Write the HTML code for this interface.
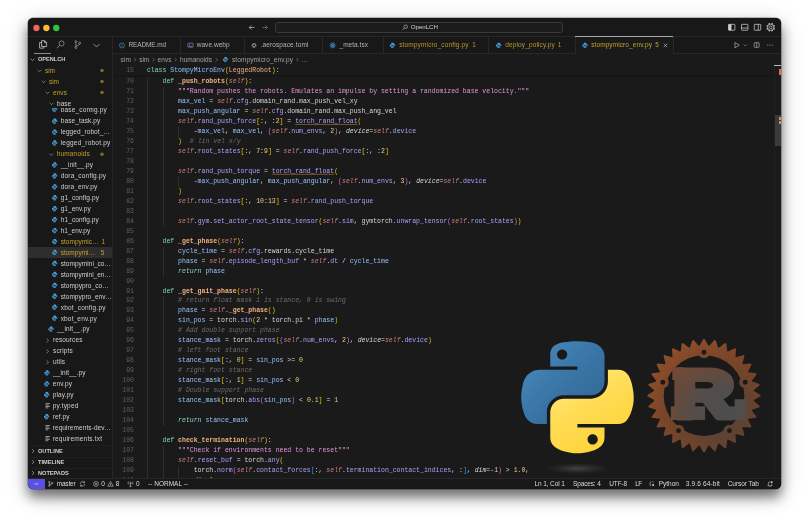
<!DOCTYPE html>
<html lang="en"><head><meta charset="utf-8"><title>OpenLCH</title>
<style>
html,body{margin:0;padding:0}
body{width:809px;height:526px;overflow:hidden;background:#fff;position:relative;font-family:"Liberation Sans", sans-serif}
#win{position:absolute;left:28px;top:18px;width:753px;height:471px;border-radius:5.2px;background:#1a1a1a;overflow:hidden;box-shadow:0 0 0 .5px rgba(0,0,0,.45),0 8px 12px rgba(0,0,0,.48),0 6px 23px rgba(0,0,0,.22)}
#pg{position:absolute;left:-28px;top:-18px;width:809px;height:526px;will-change:transform}
#pg div,#pg span,#pg svg{position:absolute}
.t{white-space:pre;line-height:10px;height:10px;font-family:"Liberation Sans", sans-serif}
.ic{overflow:visible}
.dot{width:3.6px;height:3.6px;border-radius:50%}
.ln{left:112px;width:22px;text-align:right;font:6.5123px/10px "Liberation Mono", monospace;color:#5f5f5f;height:10px}
.cl{left:146.9px;font:6.5123px/10px "Liberation Mono", monospace;white-space:pre;color:#d6d6dd;height:10px}
.cl span{position:static!important}
.g{width:.6px}
.k{color:#83d6c5} .ki{color:#83d6c5;font-style:italic} .c{color:#87c3ff} .i{color:#efb080}
.f{color:#efb080;font-weight:bold} .s{color:#ca7f7c;font-style:italic} .d{color:#e394dc} .v{color:#94c1fa}
.p{color:#aaa0fa} .w{color:#d6d6dd} .n{color:#ebc88d} .m{color:#6d6d6d;font-style:italic} .a{color:#d6d6dd;font-style:italic}
.b1{color:#e6c100} .b2{color:#da70d6} .b3{color:#179fff}
</style></head>
<body>
<div id="win"><div id="pg">
<!-- title bar -->
<div style="left:28px;top:18px;width:754px;height:18.300px;background:#181818"></div>
<div style="left:28px;top:36px;width:754px;height:.7px;background:#272727"></div>
<div style="left:275px;top:21.600px;width:287.500px;height:11.400px;box-sizing:border-box;border:.7px solid #3a3a3a;border-radius:3px;background:#1b1b1b"></div>
<!-- sidebar -->
<div style="left:28px;top:36.600px;width:84.300px;height:442px;background:#181818"></div>
<div style="left:112.200px;top:36.600px;width:.7px;height:442px;background:#272727"></div>
<div style="left:34.200px;top:52.600px;width:17px;height:1px;background:#8c8c8c"></div>
<!-- tree scroller (clipped under sticky rows) -->
<div style="left:28px;top:108px;width:84px;height:337px;overflow:hidden"><div style="left:-28px;top:-108px;width:200px;height:500px">
<div style="left:28px;top:247.33px;width:84.200px;height:11px;background:#2e2e2e"></div>
<svg style="left:0;top:0" width="809" height="526" viewBox="0 0 809 526">
<svg x="51.60" y="106.15" overflow="visible" width="6.2" height="6.2" viewBox="0 0 16 16"><path fill="#4b9fd6" d="M7.9 1C5 1 4.6 2.2 4.6 3.3V5h3.5v.7H3.2C1.9 5.700 1 6.800 1 8.500s.9 2.900 2.200 2.900h1.300V9.600c0-1.300 1.100-2.300 2.400-2.300h3.200c1 0 1.900-.9 1.900-2V3.300C12 2 10.800 1 7.900 1z"/><path fill="#3c83b8" d="M8.100 15c2.900 0 3.300-1.200 3.300-2.300V11H7.900v-.7h4.900c1.300 0 2.200-1.100 2.200-2.800s-.9-2.900-2.200-2.900h-1.300v1.800c0 1.300-1.100 2.300-2.400 2.300H5.900c-1 0-1.900.9-1.900 2v2C4 14 5.200 15 8.100 15z"/></svg>
<svg x="51.60" y="118.09" overflow="visible" width="6.2" height="6.2" viewBox="0 0 16 16"><path fill="#4b9fd6" d="M7.9 1C5 1 4.6 2.2 4.6 3.3V5h3.5v.7H3.2C1.9 5.700 1 6.800 1 8.500s.9 2.900 2.200 2.900h1.300V9.600c0-1.300 1.100-2.300 2.400-2.300h3.200c1 0 1.900-.9 1.900-2V3.300C12 2 10.800 1 7.900 1z"/><path fill="#3c83b8" d="M8.100 15c2.900 0 3.300-1.200 3.300-2.300V11H7.900v-.7h4.900c1.300 0 2.200-1.100 2.200-2.800s-.9-2.900-2.200-2.900h-1.300v1.800c0 1.300-1.100 2.300-2.400 2.300H5.900c-1 0-1.900.9-1.900 2v2C4 14 5.200 15 8.100 15z"/></svg>
<svg x="51.60" y="129.04" overflow="visible" width="6.2" height="6.2" viewBox="0 0 16 16"><path fill="#4b9fd6" d="M7.9 1C5 1 4.6 2.2 4.6 3.3V5h3.5v.7H3.2C1.9 5.700 1 6.800 1 8.500s.9 2.900 2.200 2.900h1.300V9.600c0-1.300 1.100-2.300 2.400-2.300h3.200c1 0 1.900-.9 1.900-2V3.300C12 2 10.800 1 7.900 1z"/><path fill="#3c83b8" d="M8.100 15c2.900 0 3.300-1.200 3.300-2.300V11H7.900v-.7h4.900c1.300 0 2.200-1.100 2.200-2.800s-.9-2.900-2.200-2.900h-1.300v1.800c0 1.300-1.100 2.300-2.400 2.300H5.900c-1 0-1.900.9-1.900 2v2C4 14 5.200 15 8.100 15z"/></svg>
<svg x="51.60" y="139.98" overflow="visible" width="6.2" height="6.2" viewBox="0 0 16 16"><path fill="#4b9fd6" d="M7.9 1C5 1 4.6 2.2 4.6 3.3V5h3.5v.7H3.2C1.9 5.700 1 6.800 1 8.500s.9 2.900 2.200 2.900h1.300V9.600c0-1.300 1.100-2.300 2.400-2.300h3.200c1 0 1.900-.9 1.900-2V3.300C12 2 10.800 1 7.900 1z"/><path fill="#3c83b8" d="M8.100 15c2.900 0 3.300-1.200 3.300-2.300V11H7.900v-.7h4.900c1.300 0 2.200-1.100 2.200-2.800s-.9-2.900-2.200-2.900h-1.300v1.800c0 1.300-1.100 2.300-2.400 2.300H5.900c-1 0-1.900.9-1.900 2v2C4 14 5.200 15 8.100 15z"/></svg>
<svg x="48.70" y="152.03" overflow="visible" width="5" height="5" viewBox="0 0 10 10"><path stroke="#a9a9a9" stroke-width="1.3" fill="none" d="M1.200 3.200L5 7 8.800 3.200"/></svg>
<svg x="99.50" y="151.83" overflow="visible" width="5" height="5" viewBox="0 0 5 5"><circle cx="2.500" cy="2.500" r="1.750" fill="#836b22"/></svg>
<svg x="51.60" y="161.87" overflow="visible" width="6.2" height="6.2" viewBox="0 0 16 16"><path fill="#4b9fd6" d="M7.9 1C5 1 4.6 2.2 4.6 3.3V5h3.5v.7H3.2C1.9 5.700 1 6.800 1 8.500s.9 2.900 2.200 2.900h1.300V9.600c0-1.300 1.100-2.300 2.400-2.300h3.200c1 0 1.900-.9 1.900-2V3.300C12 2 10.800 1 7.900 1z"/><path fill="#3c83b8" d="M8.100 15c2.900 0 3.300-1.200 3.300-2.300V11H7.900v-.7h4.900c1.300 0 2.200-1.100 2.200-2.800s-.9-2.900-2.200-2.900h-1.300v1.800c0 1.300-1.100 2.300-2.400 2.300H5.900c-1 0-1.900.9-1.900 2v2C4 14 5.200 15 8.100 15z"/></svg>
<svg x="51.60" y="172.82" overflow="visible" width="6.2" height="6.2" viewBox="0 0 16 16"><path fill="#4b9fd6" d="M7.9 1C5 1 4.6 2.2 4.6 3.3V5h3.5v.7H3.2C1.9 5.700 1 6.800 1 8.500s.9 2.900 2.200 2.900h1.300V9.600c0-1.300 1.100-2.300 2.400-2.300h3.200c1 0 1.900-.9 1.900-2V3.300C12 2 10.800 1 7.900 1z"/><path fill="#3c83b8" d="M8.100 15c2.900 0 3.300-1.200 3.300-2.300V11H7.900v-.7h4.900c1.300 0 2.200-1.100 2.200-2.800s-.9-2.900-2.200-2.900h-1.300v1.800c0 1.300-1.100 2.300-2.400 2.300H5.900c-1 0-1.900.9-1.900 2v2C4 14 5.200 15 8.100 15z"/></svg>
<svg x="51.60" y="183.76" overflow="visible" width="6.2" height="6.2" viewBox="0 0 16 16"><path fill="#4b9fd6" d="M7.9 1C5 1 4.6 2.2 4.6 3.3V5h3.5v.7H3.2C1.9 5.700 1 6.800 1 8.500s.9 2.900 2.200 2.900h1.300V9.600c0-1.300 1.100-2.300 2.400-2.300h3.200c1 0 1.900-.9 1.900-2V3.300C12 2 10.800 1 7.900 1z"/><path fill="#3c83b8" d="M8.100 15c2.900 0 3.300-1.200 3.300-2.300V11H7.900v-.7h4.900c1.300 0 2.200-1.100 2.200-2.800s-.9-2.900-2.200-2.900h-1.300v1.800c0 1.300-1.100 2.300-2.400 2.300H5.900c-1 0-1.900.9-1.900 2v2C4 14 5.200 15 8.100 15z"/></svg>
<svg x="51.60" y="194.71" overflow="visible" width="6.2" height="6.2" viewBox="0 0 16 16"><path fill="#4b9fd6" d="M7.9 1C5 1 4.6 2.2 4.6 3.3V5h3.5v.7H3.2C1.9 5.700 1 6.800 1 8.500s.9 2.900 2.200 2.900h1.300V9.600c0-1.300 1.100-2.300 2.400-2.300h3.200c1 0 1.900-.9 1.900-2V3.300C12 2 10.800 1 7.900 1z"/><path fill="#3c83b8" d="M8.100 15c2.900 0 3.300-1.200 3.300-2.300V11H7.900v-.7h4.900c1.300 0 2.200-1.100 2.200-2.800s-.9-2.900-2.200-2.900h-1.300v1.800c0 1.300-1.100 2.300-2.400 2.300H5.900c-1 0-1.900.9-1.900 2v2C4 14 5.200 15 8.100 15z"/></svg>
<svg x="51.60" y="205.65" overflow="visible" width="6.2" height="6.2" viewBox="0 0 16 16"><path fill="#4b9fd6" d="M7.9 1C5 1 4.6 2.2 4.6 3.3V5h3.5v.7H3.2C1.9 5.700 1 6.800 1 8.500s.9 2.900 2.200 2.900h1.300V9.600c0-1.300 1.100-2.300 2.400-2.300h3.200c1 0 1.900-.9 1.900-2V3.300C12 2 10.800 1 7.900 1z"/><path fill="#3c83b8" d="M8.100 15c2.900 0 3.300-1.200 3.300-2.300V11H7.900v-.7h4.900c1.300 0 2.200-1.100 2.200-2.800s-.9-2.900-2.200-2.900h-1.300v1.800c0 1.300-1.100 2.300-2.400 2.300H5.900c-1 0-1.900.9-1.900 2v2C4 14 5.200 15 8.100 15z"/></svg>
<svg x="51.60" y="216.60" overflow="visible" width="6.2" height="6.2" viewBox="0 0 16 16"><path fill="#4b9fd6" d="M7.9 1C5 1 4.6 2.2 4.6 3.3V5h3.5v.7H3.2C1.9 5.700 1 6.800 1 8.500s.9 2.900 2.200 2.900h1.300V9.600c0-1.300 1.100-2.300 2.400-2.300h3.200c1 0 1.900-.9 1.900-2V3.300C12 2 10.800 1 7.900 1z"/><path fill="#3c83b8" d="M8.100 15c2.900 0 3.300-1.200 3.300-2.300V11H7.900v-.7h4.900c1.300 0 2.200-1.100 2.200-2.800s-.9-2.900-2.200-2.900h-1.300v1.800c0 1.300-1.100 2.300-2.400 2.300H5.900c-1 0-1.900.9-1.900 2v2C4 14 5.200 15 8.100 15z"/></svg>
<svg x="51.60" y="227.54" overflow="visible" width="6.2" height="6.2" viewBox="0 0 16 16"><path fill="#4b9fd6" d="M7.9 1C5 1 4.6 2.2 4.6 3.3V5h3.5v.7H3.2C1.9 5.700 1 6.800 1 8.500s.9 2.900 2.200 2.900h1.300V9.600c0-1.300 1.100-2.300 2.400-2.300h3.200c1 0 1.900-.9 1.900-2V3.300C12 2 10.800 1 7.900 1z"/><path fill="#3c83b8" d="M8.100 15c2.900 0 3.300-1.200 3.300-2.300V11H7.900v-.7h4.900c1.300 0 2.200-1.100 2.200-2.800s-.9-2.900-2.200-2.900h-1.300v1.800c0 1.300-1.100 2.300-2.400 2.300H5.900c-1 0-1.900.9-1.900 2v2C4 14 5.200 15 8.100 15z"/></svg>
<svg x="51.60" y="238.49" overflow="visible" width="6.2" height="6.2" viewBox="0 0 16 16"><path fill="#4b9fd6" d="M7.9 1C5 1 4.6 2.2 4.6 3.3V5h3.5v.7H3.2C1.9 5.700 1 6.800 1 8.500s.9 2.900 2.200 2.900h1.300V9.600c0-1.300 1.100-2.300 2.400-2.300h3.200c1 0 1.900-.9 1.900-2V3.300C12 2 10.800 1 7.900 1z"/><path fill="#3c83b8" d="M8.100 15c2.900 0 3.300-1.200 3.300-2.300V11H7.900v-.7h4.900c1.300 0 2.200-1.100 2.200-2.800s-.9-2.900-2.200-2.900h-1.300v1.800c0 1.300-1.100 2.300-2.400 2.300H5.900c-1 0-1.900.9-1.900 2v2C4 14 5.200 15 8.100 15z"/></svg>
<svg x="51.60" y="249.43" overflow="visible" width="6.2" height="6.2" viewBox="0 0 16 16"><path fill="#4b9fd6" d="M7.9 1C5 1 4.6 2.2 4.6 3.3V5h3.5v.7H3.2C1.9 5.700 1 6.800 1 8.500s.9 2.900 2.200 2.900h1.300V9.600c0-1.300 1.100-2.300 2.400-2.300h3.200c1 0 1.900-.9 1.900-2V3.300C12 2 10.800 1 7.900 1z"/><path fill="#3c83b8" d="M8.100 15c2.900 0 3.300-1.200 3.300-2.300V11H7.900v-.7h4.900c1.300 0 2.200-1.100 2.200-2.800s-.9-2.900-2.200-2.900h-1.300v1.800c0 1.300-1.100 2.300-2.400 2.300H5.900c-1 0-1.900.9-1.900 2v2C4 14 5.200 15 8.100 15z"/></svg>
<svg x="51.60" y="260.38" overflow="visible" width="6.2" height="6.2" viewBox="0 0 16 16"><path fill="#4b9fd6" d="M7.9 1C5 1 4.6 2.2 4.6 3.3V5h3.5v.7H3.2C1.9 5.700 1 6.800 1 8.500s.9 2.900 2.200 2.900h1.300V9.600c0-1.300 1.100-2.300 2.400-2.300h3.200c1 0 1.900-.9 1.900-2V3.300C12 2 10.800 1 7.900 1z"/><path fill="#3c83b8" d="M8.100 15c2.900 0 3.300-1.200 3.300-2.300V11H7.900v-.7h4.900c1.300 0 2.200-1.100 2.200-2.800s-.9-2.900-2.200-2.900h-1.300v1.800c0 1.300-1.100 2.300-2.400 2.300H5.900c-1 0-1.900.9-1.900 2v2C4 14 5.200 15 8.100 15z"/></svg>
<svg x="51.60" y="271.32" overflow="visible" width="6.2" height="6.2" viewBox="0 0 16 16"><path fill="#4b9fd6" d="M7.9 1C5 1 4.6 2.2 4.6 3.3V5h3.5v.7H3.2C1.9 5.700 1 6.800 1 8.500s.9 2.900 2.200 2.900h1.300V9.600c0-1.300 1.100-2.300 2.400-2.300h3.200c1 0 1.900-.9 1.900-2V3.300C12 2 10.800 1 7.900 1z"/><path fill="#3c83b8" d="M8.100 15c2.900 0 3.300-1.200 3.300-2.300V11H7.900v-.7h4.900c1.300 0 2.200-1.100 2.200-2.800s-.9-2.900-2.200-2.900h-1.300v1.800c0 1.300-1.100 2.300-2.400 2.300H5.900c-1 0-1.900.9-1.900 2v2C4 14 5.200 15 8.100 15z"/></svg>
<svg x="51.60" y="282.27" overflow="visible" width="6.2" height="6.2" viewBox="0 0 16 16"><path fill="#4b9fd6" d="M7.9 1C5 1 4.6 2.2 4.6 3.3V5h3.5v.7H3.2C1.9 5.700 1 6.800 1 8.500s.9 2.900 2.200 2.900h1.300V9.600c0-1.300 1.100-2.300 2.400-2.300h3.200c1 0 1.900-.9 1.900-2V3.300C12 2 10.800 1 7.900 1z"/><path fill="#3c83b8" d="M8.100 15c2.900 0 3.300-1.200 3.300-2.300V11H7.900v-.7h4.900c1.300 0 2.200-1.100 2.200-2.800s-.9-2.900-2.200-2.900h-1.300v1.800c0 1.300-1.100 2.300-2.400 2.300H5.900c-1 0-1.900.9-1.900 2v2C4 14 5.200 15 8.100 15z"/></svg>
<svg x="51.60" y="293.21" overflow="visible" width="6.2" height="6.2" viewBox="0 0 16 16"><path fill="#4b9fd6" d="M7.9 1C5 1 4.6 2.2 4.6 3.3V5h3.5v.7H3.2C1.9 5.700 1 6.800 1 8.500s.9 2.900 2.200 2.900h1.300V9.600c0-1.300 1.100-2.300 2.400-2.300h3.200c1 0 1.900-.9 1.900-2V3.300C12 2 10.800 1 7.900 1z"/><path fill="#3c83b8" d="M8.100 15c2.900 0 3.300-1.200 3.300-2.300V11H7.900v-.7h4.900c1.300 0 2.200-1.100 2.200-2.800s-.9-2.900-2.200-2.900h-1.300v1.800c0 1.300-1.100 2.300-2.400 2.300H5.900c-1 0-1.900.9-1.900 2v2C4 14 5.200 15 8.100 15z"/></svg>
<svg x="51.60" y="304.16" overflow="visible" width="6.2" height="6.2" viewBox="0 0 16 16"><path fill="#4b9fd6" d="M7.9 1C5 1 4.6 2.2 4.6 3.3V5h3.5v.7H3.2C1.9 5.700 1 6.800 1 8.500s.9 2.900 2.200 2.900h1.300V9.600c0-1.300 1.100-2.300 2.400-2.300h3.200c1 0 1.900-.9 1.900-2V3.300C12 2 10.800 1 7.900 1z"/><path fill="#3c83b8" d="M8.100 15c2.900 0 3.300-1.200 3.300-2.300V11H7.900v-.7h4.900c1.300 0 2.200-1.100 2.200-2.800s-.9-2.900-2.200-2.900h-1.300v1.800c0 1.300-1.100 2.300-2.400 2.300H5.900c-1 0-1.900.9-1.900 2v2C4 14 5.200 15 8.100 15z"/></svg>
<svg x="51.60" y="315.10" overflow="visible" width="6.2" height="6.2" viewBox="0 0 16 16"><path fill="#4b9fd6" d="M7.9 1C5 1 4.6 2.2 4.6 3.3V5h3.5v.7H3.2C1.9 5.700 1 6.800 1 8.500s.9 2.900 2.200 2.900h1.300V9.600c0-1.300 1.100-2.300 2.400-2.300h3.200c1 0 1.900-.9 1.900-2V3.300C12 2 10.800 1 7.900 1z"/><path fill="#3c83b8" d="M8.100 15c2.900 0 3.300-1.200 3.300-2.300V11H7.900v-.7h4.900c1.300 0 2.200-1.100 2.200-2.800s-.9-2.900-2.200-2.900h-1.300v1.800c0 1.300-1.100 2.300-2.400 2.300H5.900c-1 0-1.900.9-1.900 2v2C4 14 5.200 15 8.100 15z"/></svg>
<svg x="47.90" y="326.05" overflow="visible" width="6.2" height="6.2" viewBox="0 0 16 16"><path fill="#4b9fd6" d="M7.9 1C5 1 4.6 2.2 4.6 3.3V5h3.5v.7H3.2C1.9 5.700 1 6.800 1 8.500s.9 2.900 2.200 2.900h1.300V9.600c0-1.300 1.100-2.300 2.400-2.300h3.200c1 0 1.900-.9 1.900-2V3.300C12 2 10.800 1 7.900 1z"/><path fill="#3c83b8" d="M8.100 15c2.900 0 3.300-1.200 3.300-2.300V11H7.900v-.7h4.900c1.300 0 2.200-1.100 2.200-2.800s-.9-2.900-2.200-2.900h-1.300v1.800c0 1.300-1.100 2.300-2.400 2.300H5.900c-1 0-1.900.9-1.900 2v2C4 14 5.200 15 8.100 15z"/></svg>
<svg x="45.00" y="337.89" overflow="visible" width="5" height="5" viewBox="0 0 10 10"><path stroke="#a9a9a9" stroke-width="1.3" fill="none" d="M3.200 1.200L7 5 3.200 8.800"/></svg>
<svg x="45.00" y="348.84" overflow="visible" width="5" height="5" viewBox="0 0 10 10"><path stroke="#a9a9a9" stroke-width="1.3" fill="none" d="M3.200 1.200L7 5 3.200 8.800"/></svg>
<svg x="45.00" y="359.78" overflow="visible" width="5" height="5" viewBox="0 0 10 10"><path stroke="#a9a9a9" stroke-width="1.3" fill="none" d="M3.200 1.200L7 5 3.200 8.800"/></svg>
<svg x="43.90" y="369.83" overflow="visible" width="6.2" height="6.2" viewBox="0 0 16 16"><path fill="#4b9fd6" d="M7.9 1C5 1 4.6 2.2 4.6 3.3V5h3.5v.7H3.2C1.9 5.700 1 6.800 1 8.500s.9 2.900 2.200 2.900h1.300V9.600c0-1.300 1.100-2.300 2.400-2.300h3.200c1 0 1.900-.9 1.900-2V3.300C12 2 10.800 1 7.900 1z"/><path fill="#3c83b8" d="M8.100 15c2.900 0 3.300-1.200 3.300-2.300V11H7.900v-.7h4.900c1.300 0 2.200-1.100 2.200-2.800s-.9-2.900-2.200-2.900h-1.300v1.800c0 1.300-1.100 2.300-2.400 2.300H5.900c-1 0-1.900.9-1.900 2v2C4 14 5.200 15 8.100 15z"/></svg>
<svg x="43.60" y="380.77" overflow="visible" width="6.2" height="6.2" viewBox="0 0 16 16"><path fill="#4b9fd6" d="M7.9 1C5 1 4.6 2.2 4.6 3.3V5h3.5v.7H3.2C1.9 5.700 1 6.800 1 8.500s.9 2.900 2.200 2.900h1.300V9.600c0-1.300 1.100-2.300 2.400-2.300h3.200c1 0 1.900-.9 1.900-2V3.300C12 2 10.800 1 7.900 1z"/><path fill="#3c83b8" d="M8.100 15c2.900 0 3.300-1.200 3.300-2.300V11H7.900v-.7h4.900c1.300 0 2.200-1.100 2.200-2.800s-.9-2.900-2.200-2.900h-1.300v1.800c0 1.300-1.100 2.300-2.400 2.300H5.900c-1 0-1.900.9-1.900 2v2C4 14 5.200 15 8.100 15z"/></svg>
<svg x="43.60" y="391.72" overflow="visible" width="6.2" height="6.2" viewBox="0 0 16 16"><path fill="#4b9fd6" d="M7.9 1C5 1 4.6 2.2 4.6 3.3V5h3.5v.7H3.2C1.9 5.700 1 6.800 1 8.500s.9 2.900 2.200 2.900h1.300V9.600c0-1.300 1.100-2.300 2.400-2.300h3.200c1 0 1.900-.9 1.900-2V3.300C12 2 10.800 1 7.900 1z"/><path fill="#3c83b8" d="M8.100 15c2.900 0 3.300-1.200 3.300-2.300V11H7.900v-.7h4.900c1.300 0 2.200-1.100 2.200-2.800s-.9-2.900-2.200-2.900h-1.300v1.800c0 1.300-1.100 2.300-2.400 2.300H5.900c-1 0-1.900.9-1.900 2v2C4 14 5.200 15 8.100 15z"/></svg>
<svg x="44.70" y="402.76" overflow="visible" width="6" height="6" viewBox="0 0 12 12"><path stroke="#b8b8b8" stroke-width="1.500" fill="none" d="M1.500 1.800h9M1.500 4.600h6.500M1.500 7.400h9M1.500 10.200h5.500"/></svg>
<svg x="43.60" y="413.61" overflow="visible" width="6.2" height="6.2" viewBox="0 0 16 16"><path fill="#4b9fd6" d="M7.9 1C5 1 4.6 2.2 4.6 3.3V5h3.5v.7H3.2C1.9 5.700 1 6.800 1 8.500s.9 2.900 2.200 2.900h1.300V9.600c0-1.300 1.100-2.300 2.400-2.300h3.200c1 0 1.900-.9 1.900-2V3.300C12 2 10.800 1 7.900 1z"/><path fill="#3c83b8" d="M8.100 15c2.900 0 3.300-1.200 3.300-2.300V11H7.900v-.7h4.900c1.300 0 2.200-1.100 2.200-2.800s-.9-2.900-2.200-2.900h-1.300v1.800c0 1.300-1.100 2.300-2.400 2.300H5.900c-1 0-1.900.9-1.900 2v2C4 14 5.200 15 8.100 15z"/></svg>
<svg x="44.70" y="424.65" overflow="visible" width="6" height="6" viewBox="0 0 12 12"><path stroke="#b8b8b8" stroke-width="1.500" fill="none" d="M1.500 1.800h9M1.500 4.600h6.500M1.500 7.400h9M1.500 10.200h5.500"/></svg>
<svg x="44.70" y="435.60" overflow="visible" width="6" height="6" viewBox="0 0 12 12"><path stroke="#b8b8b8" stroke-width="1.500" fill="none" d="M1.500 1.800h9M1.500 4.600h6.500M1.500 7.400h9M1.500 10.200h5.500"/></svg>
</svg>
<span class="t" style="left:60.70px;top:104.55px;font-size:6.5px;color:#cfcfcf;letter-spacing:0.183px;">base_config.py</span>
<span class="t" style="left:60.70px;top:116.49px;font-size:6.5px;color:#cfcfcf;letter-spacing:0.124px;">base_task.py</span>
<span class="t" style="left:60.70px;top:127.44px;font-size:6.5px;color:#cfcfcf;letter-spacing:0.087px;">legged_robot_…</span>
<span class="t" style="left:60.70px;top:138.38px;font-size:6.5px;color:#cfcfcf;letter-spacing:0.212px;">legged_robot.py</span>
<span class="t" style="left:56.70px;top:149.33px;font-size:6.5px;color:#c5a028;letter-spacing:0.165px;">humanoids</span>
<span class="t" style="left:60.70px;top:160.27px;font-size:6.5px;color:#cfcfcf;letter-spacing:0.095px;">__init__.py</span>
<span class="t" style="left:60.70px;top:171.22px;font-size:6.5px;color:#cfcfcf;letter-spacing:0.204px;">dora_config.py</span>
<span class="t" style="left:60.70px;top:182.16px;font-size:6.5px;color:#cfcfcf;letter-spacing:0.137px;">dora_env.py</span>
<span class="t" style="left:60.70px;top:193.11px;font-size:6.5px;color:#cfcfcf;letter-spacing:0.135px;">g1_config.py</span>
<span class="t" style="left:60.70px;top:204.05px;font-size:6.5px;color:#cfcfcf;letter-spacing:0.054px;">g1_env.py</span>
<span class="t" style="left:60.70px;top:215.00px;font-size:6.5px;color:#cfcfcf;letter-spacing:0.119px;">h1_config.py</span>
<span class="t" style="left:60.70px;top:225.94px;font-size:6.5px;color:#cfcfcf;letter-spacing:-0.002px;">h1_env.py</span>
<span class="t" style="left:60.70px;top:236.89px;font-size:6.5px;color:#c5a028;letter-spacing:0.044px;">stompymic…</span>
<span class="t" style="left:101.40px;top:236.89px;font-size:6.5px;color:#c5a028;letter-spacing:0.000px;">1</span>
<span class="t" style="left:60.70px;top:247.83px;font-size:6.5px;color:#c5a028;letter-spacing:-0.001px;">stompymi…</span>
<span class="t" style="left:100.70px;top:247.83px;font-size:6.5px;color:#c5a028;letter-spacing:0.000px;">5</span>
<span class="t" style="left:60.70px;top:258.78px;font-size:6.5px;color:#cfcfcf;letter-spacing:0.032px;">stompymini_co…</span>
<span class="t" style="left:60.70px;top:269.72px;font-size:6.5px;color:#cfcfcf;letter-spacing:0.006px;">stompymini_en…</span>
<span class="t" style="left:60.70px;top:280.67px;font-size:6.5px;color:#cfcfcf;letter-spacing:0.052px;">stompypro_co…</span>
<span class="t" style="left:60.70px;top:291.61px;font-size:6.5px;color:#cfcfcf;letter-spacing:0.025px;">stompypro_env…</span>
<span class="t" style="left:60.70px;top:302.56px;font-size:6.5px;color:#cfcfcf;letter-spacing:0.220px;">xbot_config.py</span>
<span class="t" style="left:60.70px;top:313.50px;font-size:6.5px;color:#cfcfcf;letter-spacing:0.157px;">xbot_env.py</span>
<span class="t" style="left:57.00px;top:324.45px;font-size:6.5px;color:#cfcfcf;letter-spacing:0.095px;">__init__.py</span>
<span class="t" style="left:53.00px;top:335.39px;font-size:6.5px;color:#cfcfcf;letter-spacing:0.106px;">resources</span>
<span class="t" style="left:53.00px;top:346.34px;font-size:6.5px;color:#cfcfcf;letter-spacing:0.174px;">scripts</span>
<span class="t" style="left:53.00px;top:357.28px;font-size:6.5px;color:#cfcfcf;letter-spacing:0.087px;">utils</span>
<span class="t" style="left:53.00px;top:368.23px;font-size:6.5px;color:#cfcfcf;letter-spacing:0.095px;">__init__.py</span>
<span class="t" style="left:52.70px;top:379.17px;font-size:6.5px;color:#cfcfcf;letter-spacing:0.105px;">env.py</span>
<span class="t" style="left:52.70px;top:390.12px;font-size:6.5px;color:#cfcfcf;letter-spacing:0.125px;">play.py</span>
<span class="t" style="left:52.70px;top:401.06px;font-size:6.5px;color:#cfcfcf;letter-spacing:0.238px;">py.typed</span>
<span class="t" style="left:52.70px;top:412.01px;font-size:6.5px;color:#cfcfcf;letter-spacing:0.122px;">ref.py</span>
<span class="t" style="left:52.70px;top:422.95px;font-size:6.5px;color:#cfcfcf;letter-spacing:0.084px;">requirements-dev…</span>
<span class="t" style="left:52.70px;top:433.90px;font-size:6.5px;color:#cfcfcf;letter-spacing:0.181px;">requirements.txt</span>
</div></div>
<!-- sidebar section headers -->
<div style="left:28px;top:445.400px;width:84.200px;height:.6px;background:#1f1f1f"></div>
<div style="left:28px;top:456.500px;width:84.200px;height:.6px;background:#1f1f1f"></div>
<div style="left:28px;top:467.500px;width:84.200px;height:.6px;background:#1f1f1f"></div>
<!-- tab bar -->
<div style="left:112.900px;top:36.600px;width:669px;height:17.200px;background:#181818"></div>
<div style="left:112.900px;top:53.400px;width:669px;height:.7px;background:#272727"></div>
<div style="left:575.400px;top:36.600px;width:97.300px;height:17.600px;background:#1a1a1a"></div>
<div style="left:575.400px;top:36.200px;width:97.300px;height:.8px;background:#a8a8a8"></div>
<div style="left:180.400px;top:36.600px;width:.6px;height:17px;background:#272727"></div>
<div style="left:244px;top:36.600px;width:.6px;height:17px;background:#272727"></div>
<div style="left:322.400px;top:36.600px;width:.6px;height:17px;background:#272727"></div>
<div style="left:382.600px;top:36.600px;width:.6px;height:17px;background:#272727"></div>
<div style="left:488px;top:36.600px;width:.6px;height:17px;background:#272727"></div>
<div style="left:575.100px;top:36.600px;width:.6px;height:17px;background:#272727"></div>
<div style="left:672.600px;top:36.600px;width:.6px;height:17px;background:#272727"></div>
<!-- editor -->
<div class="g" style="left:146.90px;top:77.32px;height:418.40px;background:#2e2e2e"></div>
<div class="g" style="left:162.53px;top:87.28px;height:139.47px;background:#2e2e2e"></div>
<div class="g" style="left:162.53px;top:246.67px;height:29.89px;background:#2e2e2e"></div>
<div class="g" style="left:162.53px;top:296.48px;height:129.51px;background:#2e2e2e"></div>
<div class="g" style="left:162.53px;top:445.91px;height:49.81px;background:#2e2e2e"></div>
<div class="g" style="left:178.16px;top:127.13px;height:9.96px;background:#2e2e2e"></div>
<div class="g" style="left:178.16px;top:176.94px;height:9.96px;background:#2e2e2e"></div>
<div class="g" style="left:178.16px;top:465.84px;height:29.89px;background:#2e2e2e"></div>
<div style="left:112.900px;top:64.500px;width:661px;height:10.600px;background:#1a1a1a"></div>
<div style="left:112.900px;top:75px;width:661px;height:1.500px;background:linear-gradient(rgba(0,0,0,.25),rgba(0,0,0,0))"></div>
<div class="ln" style="top:65.80px">15</div>
<div class="cl" style="top:65.80px"><span class="k">class</span> <span class="c">StompyMicroEnv</span><span class="b1">(</span><span class="i">LeggedRobot</span><span class="b1">)</span><span class="w">:</span></div>
<div class="ln" style="top:77.30px">70</div>
<div class="cl" style="top:77.30px">    <span class="k">def</span> <span class="f">_push_robots</span><span class="b1">(</span><span class="s">self</span><span class="b1">)</span><span class="w">:</span></div>
<div class="ln" style="top:87.26px">71</div>
<div class="cl" style="top:87.26px">        <span class="d">&quot;&quot;&quot;Random pushes the robots. Emulates an impulse by setting a randomized base velocity.&quot;&quot;&quot;</span></div>
<div class="ln" style="top:97.22px">72</div>
<div class="cl" style="top:97.22px">        <span class="v">max_vel</span><span class="w"> = </span><span class="s">self</span><span class="w">.</span><span class="p">cfg</span><span class="w">.domain_rand.max_push_vel_xy</span></div>
<div class="ln" style="top:107.19px">73</div>
<div class="cl" style="top:107.19px">        <span class="v">max_push_angular</span><span class="w"> = </span><span class="s">self</span><span class="w">.</span><span class="p">cfg</span><span class="w">.domain_rand.max_push_ang_vel</span></div>
<div class="ln" style="top:117.15px">74</div>
<div class="cl" style="top:117.15px">        <span class="s">self</span><span class="w">.</span><span class="p">rand_push_force</span><span class="b1">[</span><span class="w">:, :</span><span class="n">2</span><span class="b1">]</span><span class="w"> = </span><span class="p">torch_rand_float</span><span class="b1">(</span></div>
<div class="ln" style="top:127.11px">75</div>
<div class="cl" style="top:127.11px">            <span class="w">-</span><span class="v">max_vel</span><span class="w">, </span><span class="v">max_vel</span><span class="w">, </span><span class="b2">(</span><span class="s">self</span><span class="w">.</span><span class="p">num_envs</span><span class="w">, </span><span class="n">2</span><span class="b2">)</span><span class="w">, </span><span class="a">device</span><span class="w">=</span><span class="s">self</span><span class="w">.</span><span class="p">device</span></div>
<div class="ln" style="top:137.07px">76</div>
<div class="cl" style="top:137.07px">        <span class="b1">)</span>  <span class="m"># lin vel x/y</span></div>
<div class="ln" style="top:147.03px">77</div>
<div class="cl" style="top:147.03px">        <span class="s">self</span><span class="w">.</span><span class="p">root_states</span><span class="b1">[</span><span class="w">:, </span><span class="n">7</span><span class="w">:</span><span class="n">9</span><span class="b1">]</span><span class="w"> = </span><span class="s">self</span><span class="w">.</span><span class="p">rand_push_force</span><span class="b1">[</span><span class="w">:, :</span><span class="n">2</span><span class="b1">]</span></div>
<div class="ln" style="top:157.00px">78</div>
<div class="ln" style="top:166.96px">79</div>
<div class="cl" style="top:166.96px">        <span class="s">self</span><span class="w">.</span><span class="p">rand_push_torque</span><span class="w"> = </span><span class="p">torch_rand_float</span><span class="b1">(</span></div>
<div class="ln" style="top:176.92px">80</div>
<div class="cl" style="top:176.92px">            <span class="w">-</span><span class="v">max_push_angular</span><span class="w">, </span><span class="v">max_push_angular</span><span class="w">, </span><span class="b2">(</span><span class="s">self</span><span class="w">.</span><span class="p">num_envs</span><span class="w">, </span><span class="n">3</span><span class="b2">)</span><span class="w">, </span><span class="a">device</span><span class="w">=</span><span class="s">self</span><span class="w">.</span><span class="p">device</span></div>
<div class="ln" style="top:186.88px">81</div>
<div class="cl" style="top:186.88px">        <span class="b1">)</span></div>
<div class="ln" style="top:196.84px">82</div>
<div class="cl" style="top:196.84px">        <span class="s">self</span><span class="w">.</span><span class="p">root_states</span><span class="b1">[</span><span class="w">:, </span><span class="n">10</span><span class="w">:</span><span class="n">13</span><span class="b1">]</span><span class="w"> = </span><span class="s">self</span><span class="w">.</span><span class="p">rand_push_torque</span></div>
<div class="ln" style="top:206.81px">83</div>
<div class="ln" style="top:216.77px">84</div>
<div class="cl" style="top:216.77px">        <span class="s">self</span><span class="w">.</span><span class="p">gym</span><span class="w">.</span><span class="p">set_actor_root_state_tensor</span><span class="b1">(</span><span class="s">self</span><span class="w">.</span><span class="p">sim</span><span class="w">, gymtorch.</span><span class="p">unwrap_tensor</span><span class="b2">(</span><span class="s">self</span><span class="w">.</span><span class="p">root_states</span><span class="b2">)</span><span class="b1">)</span></div>
<div class="ln" style="top:226.73px">85</div>
<div class="ln" style="top:236.69px">86</div>
<div class="cl" style="top:236.69px">    <span class="k">def</span> <span class="f">_get_phase</span><span class="b1">(</span><span class="s">self</span><span class="b1">)</span><span class="w">:</span></div>
<div class="ln" style="top:246.65px">87</div>
<div class="cl" style="top:246.65px">        <span class="v">cycle_time</span><span class="w"> = </span><span class="s">self</span><span class="w">.</span><span class="p">cfg</span><span class="w">.rewards.cycle_time</span></div>
<div class="ln" style="top:256.62px">88</div>
<div class="cl" style="top:256.62px">        <span class="v">phase</span><span class="w"> = </span><span class="s">self</span><span class="w">.</span><span class="p">episode_length_buf</span><span class="w"> * </span><span class="s">self</span><span class="w">.</span><span class="p">dt</span><span class="w"> / </span><span class="v">cycle_time</span></div>
<div class="ln" style="top:266.58px">89</div>
<div class="cl" style="top:266.58px">        <span class="ki">return</span> <span class="v">phase</span></div>
<div class="ln" style="top:276.54px">90</div>
<div class="ln" style="top:286.50px">91</div>
<div class="cl" style="top:286.50px">    <span class="k">def</span> <span class="f">_get_gait_phase</span><span class="b1">(</span><span class="s">self</span><span class="b1">)</span><span class="w">:</span></div>
<div class="ln" style="top:296.46px">92</div>
<div class="cl" style="top:296.46px">        <span class="m"># return float mask 1 is stance, 0 is swing</span></div>
<div class="ln" style="top:306.43px">93</div>
<div class="cl" style="top:306.43px">        <span class="v">phase</span><span class="w"> = </span><span class="s">self</span><span class="w">.</span><span class="f">_get_phase</span><span class="b1">()</span></div>
<div class="ln" style="top:316.39px">94</div>
<div class="cl" style="top:316.39px">        <span class="v">sin_pos</span><span class="w"> = torch.</span><span class="p">sin</span><span class="b1">(</span><span class="n">2</span><span class="w"> * torch.pi * </span><span class="v">phase</span><span class="b1">)</span></div>
<div class="ln" style="top:326.35px">95</div>
<div class="cl" style="top:326.35px">        <span class="m"># Add double support phase</span></div>
<div class="ln" style="top:336.31px">96</div>
<div class="cl" style="top:336.31px">        <span class="v">stance_mask</span><span class="w"> = torch.</span><span class="p">zeros</span><span class="b1">(</span><span class="b2">(</span><span class="s">self</span><span class="w">.</span><span class="p">num_envs</span><span class="w">, </span><span class="n">2</span><span class="b2">)</span><span class="w">, </span><span class="a">device</span><span class="w">=</span><span class="s">self</span><span class="w">.</span><span class="p">device</span><span class="b1">)</span></div>
<div class="ln" style="top:346.27px">97</div>
<div class="cl" style="top:346.27px">        <span class="m"># left foot stance</span></div>
<div class="ln" style="top:356.24px">98</div>
<div class="cl" style="top:356.24px">        <span class="v">stance_mask</span><span class="b1">[</span><span class="w">:, </span><span class="n">0</span><span class="b1">]</span><span class="w"> = </span><span class="v">sin_pos</span><span class="w"> &gt;= </span><span class="n">0</span></div>
<div class="ln" style="top:366.20px">99</div>
<div class="cl" style="top:366.20px">        <span class="m"># right foot stance</span></div>
<div class="ln" style="top:376.16px">100</div>
<div class="cl" style="top:376.16px">        <span class="v">stance_mask</span><span class="b1">[</span><span class="w">:, </span><span class="n">1</span><span class="b1">]</span><span class="w"> = </span><span class="v">sin_pos</span><span class="w"> &lt; </span><span class="n">0</span></div>
<div class="ln" style="top:386.12px">101</div>
<div class="cl" style="top:386.12px">        <span class="m"># Double support phase</span></div>
<div class="ln" style="top:396.08px">102</div>
<div class="cl" style="top:396.08px">        <span class="v">stance_mask</span><span class="b1">[</span><span class="w">torch.</span><span class="p">abs</span><span class="b2">(</span><span class="v">sin_pos</span><span class="b2">)</span><span class="w"> &lt; </span><span class="n">0.1</span><span class="b1">]</span><span class="w"> = </span><span class="n">1</span></div>
<div class="ln" style="top:406.05px">103</div>
<div class="ln" style="top:416.01px">104</div>
<div class="cl" style="top:416.01px">        <span class="ki">return</span> <span class="v">stance_mask</span></div>
<div class="ln" style="top:425.97px">105</div>
<div class="ln" style="top:435.93px">106</div>
<div class="cl" style="top:435.93px">    <span class="k">def</span> <span class="f">check_termination</span><span class="b1">(</span><span class="s">self</span><span class="b1">)</span><span class="w">:</span></div>
<div class="ln" style="top:445.89px">107</div>
<div class="cl" style="top:445.89px">        <span class="d">&quot;&quot;&quot;Check if environments need to be reset&quot;&quot;&quot;</span></div>
<div class="ln" style="top:455.86px">108</div>
<div class="cl" style="top:455.86px">        <span class="s">self</span><span class="w">.</span><span class="p">reset_buf</span><span class="w"> = torch.</span><span class="p">any</span><span class="b1">(</span></div>
<div class="ln" style="top:465.82px">109</div>
<div class="cl" style="top:465.82px">            <span class="w">torch.</span><span class="p">norm</span><span class="b2">(</span><span class="s">self</span><span class="w">.</span><span class="p">contact_forces</span><span class="b3">[</span><span class="w">:, </span><span class="s">self</span><span class="w">.</span><span class="p">termination_contact_indices</span><span class="w">, :</span><span class="b3">]</span><span class="w">, </span><span class="a">dim</span><span class="w">=-</span><span class="n">1</span><span class="b2">)</span><span class="w"> &gt; </span><span class="n">1.0</span><span class="w">,</span></div>
<div class="ln" style="top:475.78px">110</div>
<div class="cl" style="top:475.78px">            <span class="a">dim</span><span class="w">=</span><span class="n">1</span><span class="w">,</span></div>
<!-- overview ruler / scrollbar -->
<div style="left:774px;top:65.200px;width:.6px;height:413.300px;background:#212121"></div>
<div style="left:774.300px;top:65px;width:7px;height:.9px;background:#b8b8b8"></div>
<div style="left:774.600px;top:115px;width:6.600px;height:30.600px;background:#3a3a3a"></div>
<div style="left:778.600px;top:69px;width:2.600px;height:5.600px;background:#f0693e"></div>
<div style="left:778.600px;top:117.300px;width:2.600px;height:2.600px;background:#c99a52"></div>
<div style="left:778.600px;top:121px;width:2.600px;height:2.600px;background:#c99a52"></div>
<!-- status bar -->
<div style="left:28px;top:478.500px;width:754px;height:11px;background:#181818"></div>
<div style="left:28px;top:478.300px;width:754px;height:.6px;background:#272727"></div>
<div style="left:28px;top:478.500px;width:16.800px;height:11px;background:#5a50e6"></div>
<svg style="left:0;top:0" width="809" height="526" viewBox="0 0 809 526">
<svg x="30.00" y="57.00" overflow="visible" width="5" height="5" viewBox="0 0 10 10"><path stroke="#bdbdbd" stroke-width="1.3" fill="none" d="M1.200 3.200L5 7 8.800 3.200"/></svg>
<svg x="37.00" y="68.20" overflow="visible" width="5" height="5" viewBox="0 0 10 10"><path stroke="#a9a9a9" stroke-width="1.3" fill="none" d="M1.200 3.200L5 7 8.800 3.200"/></svg>
<svg x="41.20" y="79.20" overflow="visible" width="5" height="5" viewBox="0 0 10 10"><path stroke="#a9a9a9" stroke-width="1.3" fill="none" d="M1.200 3.200L5 7 8.800 3.200"/></svg>
<svg x="45.00" y="90.20" overflow="visible" width="5" height="5" viewBox="0 0 10 10"><path stroke="#a9a9a9" stroke-width="1.3" fill="none" d="M1.200 3.200L5 7 8.800 3.200"/></svg>
<svg x="99.50" y="68.00" overflow="visible" width="5" height="5" viewBox="0 0 5 5"><circle cx="2.500" cy="2.500" r="1.750" fill="#836b22"/></svg>
<svg x="99.50" y="79.00" overflow="visible" width="5" height="5" viewBox="0 0 5 5"><circle cx="2.500" cy="2.500" r="1.750" fill="#836b22"/></svg>
<svg x="99.50" y="90.00" overflow="visible" width="5" height="5" viewBox="0 0 5 5"><circle cx="2.500" cy="2.500" r="1.750" fill="#836b22"/></svg>
<svg x="30.50" y="448.70" overflow="visible" width="5" height="5" viewBox="0 0 10 10"><path stroke="#bdbdbd" stroke-width="1.3" fill="none" d="M3.200 1.200L7 5 3.200 8.800"/></svg>
<svg x="30.50" y="459.60" overflow="visible" width="5" height="5" viewBox="0 0 10 10"><path stroke="#bdbdbd" stroke-width="1.3" fill="none" d="M3.200 1.200L7 5 3.200 8.800"/></svg>
<svg x="30.50" y="470.50" overflow="visible" width="5" height="5" viewBox="0 0 10 10"><path stroke="#bdbdbd" stroke-width="1.3" fill="none" d="M3.200 1.200L7 5 3.200 8.800"/></svg>
<svg x="132.70" y="57.50" overflow="visible" width="4.6" height="4.6" viewBox="0 0 10 10"><path stroke="#8a8a8a" stroke-width="1.3" fill="none" d="M3.200 1.200L7 5 3.200 8.800"/></svg>
<svg x="151.20" y="57.50" overflow="visible" width="4.6" height="4.6" viewBox="0 0 10 10"><path stroke="#8a8a8a" stroke-width="1.3" fill="none" d="M3.200 1.200L7 5 3.200 8.800"/></svg>
<svg x="173.20" y="57.50" overflow="visible" width="4.6" height="4.6" viewBox="0 0 10 10"><path stroke="#8a8a8a" stroke-width="1.3" fill="none" d="M3.200 1.200L7 5 3.200 8.800"/></svg>
<svg x="214.20" y="57.50" overflow="visible" width="4.6" height="4.6" viewBox="0 0 10 10"><path stroke="#8a8a8a" stroke-width="1.3" fill="none" d="M3.200 1.200L7 5 3.200 8.800"/></svg>
<svg x="294.90" y="57.50" overflow="visible" width="4.6" height="4.6" viewBox="0 0 10 10"><path stroke="#8a8a8a" stroke-width="1.3" fill="none" d="M3.200 1.200L7 5 3.200 8.800"/></svg>
<svg x="222.50" y="56.60" overflow="visible" width="6" height="6" viewBox="0 0 16 16"><path fill="#4b9fd6" d="M7.9 1C5 1 4.6 2.2 4.6 3.3V5h3.5v.7H3.2C1.9 5.700 1 6.800 1 8.500s.9 2.900 2.200 2.900h1.300V9.600c0-1.300 1.100-2.300 2.400-2.300h3.200c1 0 1.900-.9 1.900-2V3.300C12 2 10.800 1 7.900 1z"/><path fill="#3c83b8" d="M8.100 15c2.900 0 3.300-1.200 3.300-2.300V11H7.900v-.7h4.900c1.300 0 2.200-1.100 2.200-2.800s-.9-2.900-2.200-2.900h-1.300v1.800c0 1.300-1.100 2.300-2.400 2.300H5.900c-1 0-1.900.9-1.900 2v2C4 14 5.200 15 8.100 15z"/></svg>
<svg x="118.80" y="42.20" overflow="visible" width="6.400" height="6.400" viewBox="0 0 16 16"><circle cx="8" cy="8" r="6.300" fill="none" stroke="#4f9bd0" stroke-width="1.500"/><path d="M8 7v4.500" stroke="#4f9bd0" stroke-width="1.700"/><circle cx="8" cy="4.700" r="1" fill="#4f9bd0"/></svg>
<svg x="187.30" y="42.20" overflow="visible" width="6.400" height="6.400" viewBox="0 0 16 16"><rect x="1.500" y="2.500" width="13" height="10" rx="1.500" fill="none" stroke="#9a7fd6" stroke-width="1.700"/><path d="M3 11l3-3.500 2.500 2.500 2-2 2.500 3z" fill="#9a7fd6"/><circle cx="5.500" cy="5.700" r="1.200" fill="#9a7fd6"/></svg>
<svg x="250.80" y="42.20" overflow="visible" width="6.4" height="6.4" viewBox="0 0 16 16"><circle cx="8" cy="8" r="4.600" fill="none" stroke="#9aa0a6" stroke-width="2.600" stroke-dasharray="2.400 1.210"/><circle cx="8" cy="8" r="3.400" fill="none" stroke="#9aa0a6" stroke-width="1.600"/></svg>
<svg x="329.30" y="42.00" overflow="visible" width="6.800" height="6.800" viewBox="0 0 16 16"><g fill="none" stroke="#4f9bd0" stroke-width="1.100"><ellipse cx="8" cy="8" rx="7" ry="2.700"/><ellipse cx="8" cy="8" rx="7" ry="2.700" transform="rotate(60 8 8)"/><ellipse cx="8" cy="8" rx="7" ry="2.700" transform="rotate(120 8 8)"/></g><circle cx="8" cy="8" r="1.400" fill="#4f9bd0"/></svg>
<svg x="389.40" y="42.30" overflow="visible" width="6.2" height="6.2" viewBox="0 0 16 16"><path fill="#4b9fd6" d="M7.9 1C5 1 4.6 2.2 4.6 3.3V5h3.5v.7H3.2C1.9 5.700 1 6.800 1 8.500s.9 2.900 2.200 2.900h1.300V9.600c0-1.300 1.100-2.300 2.400-2.300h3.200c1 0 1.900-.9 1.900-2V3.300C12 2 10.800 1 7.900 1z"/><path fill="#3c83b8" d="M8.100 15c2.900 0 3.300-1.200 3.300-2.300V11H7.900v-.7h4.900c1.300 0 2.200-1.100 2.200-2.800s-.9-2.900-2.200-2.900h-1.300v1.800c0 1.300-1.100 2.300-2.400 2.300H5.900c-1 0-1.900.9-1.900 2v2C4 14 5.200 15 8.100 15z"/></svg>
<svg x="495.60" y="42.30" overflow="visible" width="6.2" height="6.2" viewBox="0 0 16 16"><path fill="#4b9fd6" d="M7.9 1C5 1 4.6 2.2 4.6 3.3V5h3.5v.7H3.2C1.9 5.700 1 6.800 1 8.500s.9 2.900 2.200 2.900h1.300V9.600c0-1.300 1.100-2.300 2.400-2.300h3.200c1 0 1.900-.9 1.900-2V3.300C12 2 10.800 1 7.900 1z"/><path fill="#3c83b8" d="M8.100 15c2.900 0 3.300-1.200 3.300-2.300V11H7.900v-.7h4.900c1.300 0 2.200-1.100 2.200-2.800s-.9-2.900-2.200-2.900h-1.300v1.800c0 1.300-1.100 2.300-2.400 2.300H5.900c-1 0-1.900.9-1.900 2v2C4 14 5.200 15 8.100 15z"/></svg>
<svg x="581.90" y="42.30" overflow="visible" width="6.2" height="6.2" viewBox="0 0 16 16"><path fill="#4b9fd6" d="M7.9 1C5 1 4.6 2.2 4.6 3.3V5h3.5v.7H3.2C1.9 5.700 1 6.800 1 8.500s.9 2.900 2.200 2.900h1.300V9.600c0-1.300 1.100-2.300 2.400-2.300h3.200c1 0 1.900-.9 1.900-2V3.300C12 2 10.800 1 7.900 1z"/><path fill="#3c83b8" d="M8.100 15c2.900 0 3.300-1.200 3.300-2.300V11H7.900v-.7h4.900c1.300 0 2.200-1.100 2.200-2.800s-.9-2.900-2.200-2.900h-1.300v1.800c0 1.300-1.100 2.300-2.400 2.300H5.900c-1 0-1.900.9-1.900 2v2C4 14 5.200 15 8.100 15z"/></svg>
<svg x="663.0" y="42.9" overflow="visible" width="5" height="5" viewBox="0 0 10 10"><path stroke="#c8c8c8" stroke-width="1.300" d="M1.500 1.500l7 7M8.500 1.500l-7 7"/></svg>
<svg x="733.0" y="41.300000000000004" overflow="visible" width="7.800" height="7.800" viewBox="0 0 16 16"><path fill="none" stroke="#c0c0c0" stroke-width="1.300" stroke-linejoin="round" d="M4 2.500v11L13 8z"/></svg>
<svg x="743.20" y="43.20" overflow="visible" width="4" height="4" viewBox="0 0 10 10"><path stroke="#b0b0b0" stroke-width="1.3" fill="none" d="M1.200 3.200L5 7 8.800 3.200"/></svg>
<svg x="753.4000000000001" y="41.7" overflow="visible" width="6.600" height="6.600" viewBox="0 0 16 16"><rect x="2" y="2.500" width="12" height="11" rx="1.200" fill="none" stroke="#c0c0c0" stroke-width="1.500"/><path d="M8 2.500v11" stroke="#c0c0c0" stroke-width="1.500"/></svg>
<svg x="766.5" y="44" overflow="visible" width="7" height="2" viewBox="0 0 14 4"><circle cx="2.500" cy="2" r="1.200" fill="#b0b0b0"/><circle cx="7" cy="2" r="1.200" fill="#b0b0b0"/><circle cx="11.500" cy="2" r="1.200" fill="#b0b0b0"/></svg>
<svg x="248.40" y="24.20" overflow="visible" width="6.600" height="6.600" viewBox="0 0 10 10"><path fill="none" stroke="#c4c4c4" stroke-width="1.100" d="M9 5H1.500M4.500 1.800L1.300 5l3.200 3.200"/></svg>
<svg x="261.70" y="24.20" overflow="visible" width="6.600" height="6.600" viewBox="0 0 10 10"><path fill="none" stroke="#7a7a7a" stroke-width="1.100" d="M1 5h7.500M5.500 1.800L8.700 5 5.500 8.200"/></svg>
<svg x="401.8" y="24.2" overflow="visible" width="6.400" height="6.400" viewBox="0 0 16 16"><circle cx="9.800" cy="6.200" r="4.300" fill="none" stroke="#c8c8c8" stroke-width="1.500"/><path d="M6.700 9.300L1.800 14.200" stroke="#c8c8c8" stroke-width="1.600"/></svg>
<svg x="727.75" y="23.35" overflow="visible" width="7.9" height="7.9" viewBox="0 0 16 16"><rect x="1.500" y="2" width="13" height="12" rx="1.300" fill="none" stroke="#d0d0d0" stroke-width="1.500"/><rect x="1.500" y="2" width="6" height="12" fill="#d0d0d0"/></svg>
<svg x="740.75" y="23.35" overflow="visible" width="7.9" height="7.9" viewBox="0 0 16 16"><rect x="1.500" y="2" width="13" height="12" rx="1.300" fill="none" stroke="#d0d0d0" stroke-width="1.500"/><path d="M1.500 9.500h13" stroke="#d0d0d0" stroke-width="1.500"/></svg>
<svg x="753.55" y="23.35" overflow="visible" width="7.9" height="7.9" viewBox="0 0 16 16"><rect x="1.500" y="2" width="13" height="12" rx="1.300" fill="none" stroke="#d0d0d0" stroke-width="1.500"/><path d="M9.500 2v12" stroke="#d0d0d0" stroke-width="1.500"/></svg>
<svg x="770.700" y="27.300" overflow="visible" width="1" height="1" viewBox="0 0 1 1"><g fill="none"><path d="M2.772 1.148L4.019 1.665" stroke="#cdcdcd" stroke-width="1.500"/><path d="M1.148 2.772L1.665 4.019" stroke="#cdcdcd" stroke-width="1.500"/><path d="M-1.148 2.772L-1.665 4.019" stroke="#cdcdcd" stroke-width="1.500"/><path d="M-2.772 1.148L-4.019 1.665" stroke="#cdcdcd" stroke-width="1.500"/><path d="M-2.772 -1.148L-4.019 -1.665" stroke="#cdcdcd" stroke-width="1.500"/><path d="M-1.148 -2.772L-1.665 -4.019" stroke="#cdcdcd" stroke-width="1.500"/><path d="M1.148 -2.772L1.665 -4.019" stroke="#cdcdcd" stroke-width="1.500"/><path d="M2.772 -1.148L4.019 -1.665" stroke="#cdcdcd" stroke-width="1.500"/><circle r="3.150" stroke="#cdcdcd" stroke-width=".800" fill="#181818"/><circle r="1.350" stroke="#cdcdcd" stroke-width=".700"/></g></svg>
<svg x="38.3" y="39.8" overflow="visible" width="9.200" height="9.200" viewBox="0 0 16 16"><path fill="none" stroke="#d8d8d8" stroke-width="1.250" stroke-linejoin="round" d="M5.800 1.500h5.400l3.300 3.300v6.900H5.800zM11 1.700v3.300h3.300M5.800 4.800H2.200v9.700h7.600v-2.800"/></svg>
<svg x="55.9" y="39.9" overflow="visible" width="9.200" height="9.200" viewBox="0 0 16 16"><circle cx="9.800" cy="6.200" r="4.400" fill="none" stroke="#a6a6a6" stroke-width="1.200"/><path d="M6.700 9.300L1.500 14.500" stroke="#a6a6a6" stroke-width="1.300"/></svg>
<svg x="73.0" y="40.0" overflow="visible" width="9.200" height="9.200" viewBox="0 0 16 16"><g fill="none" stroke="#a6a6a6" stroke-width="1.200"><circle cx="5" cy="2.800" r="1.700"/><circle cx="5" cy="13.200" r="1.700"/><circle cx="11.600" cy="5.400" r="1.700"/><path d="M5 4.500v7M11.600 7.100c0 3-6.600 1.600-6.600 4.400"/></g></svg>
<svg x="92.60" y="41.40" overflow="visible" width="8" height="8" viewBox="0 0 10 10"><path stroke="#b0b0b0" stroke-width="1" fill="none" d="M1.200 3.200L5 7 8.800 3.200"/></svg>
<svg x="33.3" y="480.9" overflow="visible" width="6" height="6" viewBox="0 0 12 12"><path fill="none" stroke="#e8e8ff" stroke-width="1.200" d="M1.500 7.500L5 4l1.500 1.500M10.500 4.500L7 8 5.500 6.500"/></svg>
<svg x="47.5" y="480.59999999999997" overflow="visible" width="6.400" height="6.600" viewBox="0 0 16 16"><g fill="none" stroke="#d4d4d4" stroke-width="1.400"><circle cx="4.500" cy="3.300" r="1.700"/><circle cx="4.500" cy="12.700" r="1.700"/><circle cx="11.500" cy="5.800" r="1.700"/><path d="M4.500 5v6M11.500 7.500c0 2.500-7 1.500-7 3.500"/></g></svg>
<svg x="79.2" y="480.59999999999997" overflow="visible" width="6.600" height="6.600" viewBox="0 0 16 16"><g fill="none" stroke="#d4d4d4" stroke-width="1.400"><path d="M2.500 8a5.500 5.500 0 0 1 9.800-3.400M13.500 8a5.500 5.500 0 0 1-9.800 3.400"/><path d="M12.800 1.500v3.400H9.400M3.200 14.500v-3.400h3.400"/></g></svg>
<svg x="92.8" y="480.7" overflow="visible" width="6.400" height="6.400" viewBox="0 0 16 16"><g fill="none" stroke="#d4d4d4" stroke-width="1.400"><circle cx="8" cy="8" r="6"/><path d="M5.500 5.500l5 5M10.500 5.500l-5 5"/></g></svg>
<svg x="107.2" y="480.59999999999997" overflow="visible" width="6.600" height="6.600" viewBox="0 0 16 16"><g fill="none" stroke="#d4d4d4" stroke-width="1.400" stroke-linejoin="round"><path d="M8 2L14.500 13.500h-13z"/><path d="M8 6.500v3.500M8 11.200v1"/></g></svg>
<svg x="127.2" y="480.59999999999997" overflow="visible" width="6.600" height="6.600" viewBox="0 0 16 16"><g fill="none" stroke="#d4d4d4" stroke-width="1.400"><circle cx="8" cy="6" r="1.800"/><path d="M3.500 2.500a5 5 0 0 0 0 7M12.500 2.500a5 5 0 0 1 0 7M8 8v6.500M5.500 14.500h5"/></g></svg>
<svg x="648.9" y="480.9" overflow="visible" width="6" height="6" viewBox="0 0 12 12"><g fill="none" stroke="#d4d4d4" stroke-width="1.200"><path d="M4.500 1.500C3 1.500 3 2.500 3 3.500s0 2-1.500 2.500C3 6.500 3 7.500 3 8.500s0 2 1.500 2"/><path d="M7.500 1.500c1.500 0 1.500 1 1.500 2"/></g><circle cx="8.500" cy="8" r="2" fill="#d4d4d4"/></svg>
<svg x="766.7" y="480.59999999999997" overflow="visible" width="6.600" height="6.600" viewBox="0 0 16 16"><g fill="none" stroke="#d4d4d4" stroke-width="1.400" stroke-linejoin="round"><path d="M4 11V7a4 4 0 0 1 5-3.900M12 8.500V11l1.200 1.500H2.800L4 11M6.500 14h3"/></g><circle cx="12" cy="4" r="2.300" fill="#d4d4d4"/></svg>
<circle cx="36.400" cy="28" r="3.150" fill="#f4635a"/><circle cx="46.350" cy="28" r="3.150" fill="#f8bd30"/><circle cx="56.250" cy="28" r="3.150" fill="#2ac63f"/><svg x="49.00" y="101.20" overflow="visible" width="5" height="5" viewBox="0 0 10 10"><path stroke="#a9a9a9" stroke-width="1.3" fill="none" d="M1.200 3.200L5 7 8.800 3.200"/></svg><svg x="295.40" y="123.50" overflow="visible" width="62.53" height="2" viewBox="0 -1 62.53 2"><path d="M0.00 0.5L1.00 -0.5L2.00 0.5L3.00 -0.5L4.00 0.5L5.00 -0.5L6.00 0.5L7.00 -0.5L8.00 0.5L9.00 -0.5L10.00 0.5L11.00 -0.5L12.00 0.5L13.00 -0.5L14.00 0.5L15.00 -0.5L16.00 0.5L17.00 -0.5L18.00 0.5L19.00 -0.5L20.00 0.5L21.00 -0.5L22.00 0.5L23.00 -0.5L24.00 0.5L25.00 -0.5L26.00 0.5L27.00 -0.5L28.00 0.5L29.00 -0.5L30.00 0.5L31.00 -0.5L32.00 0.5L33.00 -0.5L34.00 0.5L35.00 -0.5L36.00 0.5L37.00 -0.5L38.00 0.5L39.00 -0.5L40.00 0.5L41.00 -0.5L42.00 0.5L43.00 -0.5L44.00 0.5L45.00 -0.5L46.00 0.5L47.00 -0.5L48.00 0.5L49.00 -0.5L50.00 0.5L51.00 -0.5L52.00 0.5L53.00 -0.5L54.00 0.5L55.00 -0.5L56.00 0.5L57.00 -0.5L58.00 0.5L59.00 -0.5L60.00 0.5L61.00 -0.5L62.00 0.5" fill="none" stroke="#c2902e" stroke-width=".6"/></svg>
<svg x="271.96" y="173.31" overflow="visible" width="62.53" height="2" viewBox="0 -1 62.53 2"><path d="M0.00 0.5L1.00 -0.5L2.00 0.5L3.00 -0.5L4.00 0.5L5.00 -0.5L6.00 0.5L7.00 -0.5L8.00 0.5L9.00 -0.5L10.00 0.5L11.00 -0.5L12.00 0.5L13.00 -0.5L14.00 0.5L15.00 -0.5L16.00 0.5L17.00 -0.5L18.00 0.5L19.00 -0.5L20.00 0.5L21.00 -0.5L22.00 0.5L23.00 -0.5L24.00 0.5L25.00 -0.5L26.00 0.5L27.00 -0.5L28.00 0.5L29.00 -0.5L30.00 0.5L31.00 -0.5L32.00 0.5L33.00 -0.5L34.00 0.5L35.00 -0.5L36.00 0.5L37.00 -0.5L38.00 0.5L39.00 -0.5L40.00 0.5L41.00 -0.5L42.00 0.5L43.00 -0.5L44.00 0.5L45.00 -0.5L46.00 0.5L47.00 -0.5L48.00 0.5L49.00 -0.5L50.00 0.5L51.00 -0.5L52.00 0.5L53.00 -0.5L54.00 0.5L55.00 -0.5L56.00 0.5L57.00 -0.5L58.00 0.5L59.00 -0.5L60.00 0.5L61.00 -0.5L62.00 0.5" fill="none" stroke="#c2902e" stroke-width=".6"/></svg><svg x="521.2" y="341.2" overflow="visible" width="111.800" height="112.600" viewBox="0 0 110.420 112.850" preserveAspectRatio="none">
<defs>
<linearGradient id="pb" x1="0" y1="0" x2="1" y2="1"><stop offset="0" stop-color="#4a8dc2"/><stop offset=".55" stop-color="#3873a3"/><stop offset="1" stop-color="#2f6593"/></linearGradient>
<linearGradient id="py" x1=".75" y1=".85" x2=".3" y2=".1"><stop offset="0" stop-color="#ffd43b"/><stop offset=".6" stop-color="#ffdc55"/><stop offset="1" stop-color="#ffe873"/></linearGradient>
</defs>
<path fill="url(#pb)" d="M54.919 0.001C50.335 0.022 45.958 0.413 42.106 1.095 30.760 3.099 28.700 7.295 28.700 15.032L28.700 25.251 55.513 25.251 55.513 28.657 28.700 28.657 18.638 28.657C10.845 28.657 4.022 33.341 1.888 42.251-0.574 52.464-0.683 58.837 1.888 69.501 3.793 77.439 8.345 83.095 16.138 83.095L25.356 83.095 25.356 70.845C25.356 61.995 33.013 54.188 42.106 54.188L68.888 54.188C76.342 54.188 82.294 48.050 82.294 40.563L82.294 15.032C82.294 7.766 76.164 2.307 68.888 1.095 64.282 0.328 59.502-0.020 54.919 0.001zM40.419 8.220C43.188 8.220 45.450 10.518 45.450 13.345 45.450 16.161 43.188 18.438 40.419 18.438 37.639 18.438 35.388 16.161 35.388 13.345 35.388 10.518 37.639 8.220 40.419 8.220z"/>
<path fill="url(#py)" d="M85.638 28.657L85.638 40.563C85.638 49.794 77.812 57.563 68.888 57.563L42.106 57.563C34.770 57.563 28.700 63.842 28.700 71.188L28.700 96.720C28.700 103.986 35.019 108.260 42.106 110.345 50.594 112.840 58.733 113.291 68.888 110.345 75.638 108.390 82.294 104.457 82.294 96.720L82.294 86.501 55.513 86.501 55.513 83.095 82.294 83.095 95.700 83.095C103.492 83.095 106.396 77.659 109.106 69.501 111.906 61.102 111.787 53.025 109.106 42.251 107.180 34.493 103.502 28.657 95.700 28.657L85.638 28.657zM70.575 93.313C73.354 93.313 75.606 95.591 75.606 98.407 75.606 101.234 73.354 103.532 70.575 103.532 67.806 103.532 65.544 101.234 65.544 98.407 65.544 95.591 67.806 93.313 70.575 93.313z"/>
</svg><svg x="647.40" y="339.00" overflow="visible" width="113.20" height="113.20" viewBox="-1 -1 2 2">
<defs>
<radialGradient id="rg" gradientUnits="userSpaceOnUse" cx="0.300" cy="0.350" r="1.450"><stop offset="0" stop-color="#54433a"/><stop offset=".35" stop-color="#634230"/><stop offset=".7" stop-color="#7a4528"/><stop offset="1" stop-color="#8e4f2c"/></radialGradient>
<radialGradient id="rr" gradientUnits="userSpaceOnUse" cx="0.350" cy="0.300" r="1.150"><stop offset="0" stop-color="#4d4d4d"/><stop offset=".4" stop-color="#534d4a"/><stop offset=".72" stop-color="#674a3b"/><stop offset="1" stop-color="#774a33"/></radialGradient>
</defs>
<g fill="url(#rg)">
<path fill-rule="evenodd" d="M0.8814 -0.0798L0.9999 -0.0118L0.9999 0.0118L0.8814 0.0798L0.8800 0.0937L0.9830 0.1835L0.9784 0.2066L0.8489 0.2502L0.8448 0.2635L0.9283 0.3718L0.9193 0.3935L0.7838 0.4110L0.7772 0.4233L0.8380 0.5457L0.8249 0.5653L0.6885 0.5560L0.6797 0.5668L0.7154 0.6987L0.6987 0.7154L0.5668 0.6797L0.5560 0.6885L0.5653 0.8249L0.5457 0.8380L0.4233 0.7772L0.4110 0.7838L0.3935 0.9193L0.3718 0.9283L0.2635 0.8448L0.2502 0.8489L0.2066 0.9784L0.1835 0.9830L0.0937 0.8800L0.0798 0.8814L0.0118 0.9999L-0.0118 0.9999L-0.0798 0.8814L-0.0937 0.8800L-0.1835 0.9830L-0.2066 0.9784L-0.2502 0.8489L-0.2635 0.8448L-0.3718 0.9283L-0.3935 0.9193L-0.4110 0.7838L-0.4233 0.7772L-0.5457 0.8380L-0.5653 0.8249L-0.5560 0.6885L-0.5668 0.6797L-0.6987 0.7154L-0.7154 0.6987L-0.6797 0.5668L-0.6885 0.5560L-0.8249 0.5653L-0.8380 0.5457L-0.7772 0.4233L-0.7838 0.4110L-0.9193 0.3935L-0.9283 0.3718L-0.8448 0.2635L-0.8489 0.2502L-0.9784 0.2066L-0.9830 0.1835L-0.8800 0.0937L-0.8814 0.0798L-0.9999 0.0118L-0.9999 -0.0118L-0.8814 -0.0798L-0.8800 -0.0937L-0.9830 -0.1835L-0.9784 -0.2066L-0.8489 -0.2502L-0.8448 -0.2635L-0.9283 -0.3718L-0.9193 -0.3935L-0.7838 -0.4110L-0.7772 -0.4233L-0.8380 -0.5457L-0.8249 -0.5653L-0.6885 -0.5560L-0.6797 -0.5668L-0.7154 -0.6987L-0.6987 -0.7154L-0.5668 -0.6797L-0.5560 -0.6885L-0.5653 -0.8249L-0.5457 -0.8380L-0.4233 -0.7772L-0.4110 -0.7838L-0.3935 -0.9193L-0.3718 -0.9283L-0.2635 -0.8448L-0.2502 -0.8489L-0.2066 -0.9784L-0.1835 -0.9830L-0.0937 -0.8800L-0.0798 -0.8814L-0.0118 -0.9999L0.0118 -0.9999L0.0798 -0.8814L0.0937 -0.8800L0.1835 -0.9830L0.2066 -0.9784L0.2502 -0.8489L0.2635 -0.8448L0.3718 -0.9283L0.3935 -0.9193L0.4110 -0.7838L0.4233 -0.7772L0.5457 -0.8380L0.5653 -0.8249L0.5560 -0.6885L0.5668 -0.6797L0.6987 -0.7154L0.7154 -0.6987L0.6797 -0.5668L0.6885 -0.5560L0.8249 -0.5653L0.8380 -0.5457L0.7772 -0.4233L0.7838 -0.4110L0.9193 -0.3935L0.9283 -0.3718L0.8448 -0.2635L0.8489 -0.2502L0.9784 -0.2066L0.9830 -0.1835L0.8800 -0.0937ZM0.712 0A0.712 0.712 0 1 0 -0.712 0A0.712 0.712 0 1 0 0.712 0Z"/>
<circle cx="0.0000" cy="-0.7650" r="0.105"/><circle cx="0.7276" cy="-0.2364" r="0.105"/><circle cx="0.4497" cy="0.6189" r="0.105"/><circle cx="-0.4497" cy="0.6189" r="0.105"/><circle cx="-0.7276" cy="-0.2364" r="0.105"/>
</g>
<circle cx="0.0000" cy="-0.7650" r="0.043" fill="#1a1a1a"/><circle cx="0.7276" cy="-0.2364" r="0.043" fill="#1a1a1a"/><circle cx="0.4497" cy="0.6189" r="0.043" fill="#1a1a1a"/><circle cx="-0.4497" cy="0.6189" r="0.043" fill="#1a1a1a"/><circle cx="-0.7276" cy="-0.2364" r="0.043" fill="#1a1a1a"/>
<g fill="url(#rr)" stroke="url(#rr)" stroke-width="0">
<rect x="-0.560" y="-0.500" width="0.200" height="0.225"/>
<rect x="-0.585" y="0.190" width="0.605" height="0.240"/>
<rect x="0.215" y="0.190" width="0.530" height="0.240"/>
<rect x="0.540" y="0.065" width="0.205" height="0.150"/>
<text x="-0.429" y="0.370" font-family="Liberation Sans, sans-serif" font-weight="bold" font-size="1.175" stroke-width="0.120" stroke-linejoin="round" transform="scale(1.280 1)">R</text>
</g>
</svg>
</svg>
<span class="t" style="left:410.70px;top:22.40px;font-size:6.2px;color:#d0d0d0;letter-spacing:-0.031px;">OpenLCH</span>
<span class="t" style="left:128.50px;top:40.30px;font-size:6.5px;color:#b4b4b4;letter-spacing:-0.129px;">README.md</span>
<span class="t" style="left:196.70px;top:40.30px;font-size:6.5px;color:#b4b4b4;letter-spacing:0.052px;">wave.webp</span>
<span class="t" style="left:260.50px;top:40.30px;font-size:6.5px;color:#b4b4b4;letter-spacing:0.117px;">.aerospace.toml</span>
<span class="t" style="left:339.50px;top:40.30px;font-size:6.5px;color:#b4b4b4;letter-spacing:0.035px;">_meta.tsx</span>
<span class="t" style="left:399.20px;top:40.30px;font-size:6.5px;color:#b8952a;letter-spacing:0.144px;">stompymicro_config.py</span>
<span class="t" style="left:472.30px;top:40.30px;font-size:6.3px;color:#b8952a;letter-spacing:0.000px;">1</span>
<span class="t" style="left:505.20px;top:40.30px;font-size:6.5px;color:#b8952a;letter-spacing:0.139px;">deploy_policy.py</span>
<span class="t" style="left:557.80px;top:40.30px;font-size:6.3px;color:#b8952a;letter-spacing:0.000px;">1</span>
<span class="t" style="left:591.20px;top:40.30px;font-size:6.5px;color:#c5a028;letter-spacing:0.093px;">stompymicro_env.py</span>
<span class="t" style="left:655.20px;top:40.30px;font-size:6.3px;color:#c5a028;letter-spacing:0.000px;">5</span>
<span class="t" style="left:120.50px;top:54.60px;font-size:6.5px;color:#a2a2a2;letter-spacing:0.130px;">sim</span>
<span class="t" style="left:139.20px;top:54.60px;font-size:6.5px;color:#a2a2a2;letter-spacing:-0.036px;">sim</span>
<span class="t" style="left:157.50px;top:54.60px;font-size:6.5px;color:#a2a2a2;letter-spacing:0.116px;">envs</span>
<span class="t" style="left:180.00px;top:54.60px;font-size:6.5px;color:#a2a2a2;letter-spacing:0.021px;">humanoids</span>
<span class="t" style="left:232.00px;top:54.60px;font-size:6.5px;color:#a2a2a2;letter-spacing:0.104px;">stompymicro_env.py</span>
<span class="t" style="left:301.50px;top:54.60px;font-size:6.5px;color:#a2a2a2;letter-spacing:0.000px;">…</span>
<span class="t" style="left:38.00px;top:54.30px;font-size:5.6px;color:#cfcfcf;letter-spacing:-0.023px;font-weight:bold;">OPENLCH</span>
<span class="t" style="left:45.00px;top:65.50px;font-size:6.5px;color:#c5a028;letter-spacing:-0.036px;">sim</span>
<span class="t" style="left:49.00px;top:76.50px;font-size:6.5px;color:#c5a028;letter-spacing:-0.036px;">sim</span>
<span class="t" style="left:53.00px;top:87.50px;font-size:6.5px;color:#c5a028;letter-spacing:0.066px;">envs</span>
<span class="t" style="left:57.00px;top:98.50px;font-size:6.5px;color:#cfcfcf;letter-spacing:0.023px;">base</span>
<span class="t" style="left:38.00px;top:446.20px;font-size:5.6px;color:#cfcfcf;letter-spacing:0.020px;font-weight:bold;">OUTLINE</span>
<span class="t" style="left:38.00px;top:457.10px;font-size:5.6px;color:#cfcfcf;letter-spacing:0.011px;font-weight:bold;">TIMELINE</span>
<span class="t" style="left:38.00px;top:468.00px;font-size:5.6px;color:#cfcfcf;letter-spacing:0.004px;font-weight:bold;">NOTEPADS</span>
<span class="t" style="left:56.70px;top:478.90px;font-size:6.5px;color:#dadada;letter-spacing:-0.179px;">master</span>
<span class="t" style="left:101.30px;top:478.90px;font-size:6.5px;color:#dadada;letter-spacing:0.000px;">0</span>
<span class="t" style="left:115.80px;top:478.90px;font-size:6.5px;color:#dadada;letter-spacing:0.000px;">8</span>
<span class="t" style="left:136.00px;top:478.90px;font-size:6.5px;color:#dadada;letter-spacing:0.000px;">0</span>
<span class="t" style="left:148.00px;top:478.90px;font-size:6.5px;color:#dadada;letter-spacing:0.013px;">-- NORMAL --</span>
<span class="t" style="left:534.50px;top:478.90px;font-size:6.5px;color:#dadada;letter-spacing:-0.113px;">Ln 1, Col 1</span>
<span class="t" style="left:573.00px;top:478.90px;font-size:6.5px;color:#dadada;letter-spacing:-0.136px;">Spaces: 4</span>
<span class="t" style="left:609.30px;top:478.90px;font-size:6.5px;color:#dadada;letter-spacing:-0.144px;">UTF-8</span>
<span class="t" style="left:635.30px;top:478.90px;font-size:6.5px;color:#dadada;letter-spacing:-0.547px;">LF</span>
<span class="t" style="left:658.80px;top:478.90px;font-size:6.5px;color:#dadada;letter-spacing:-0.025px;">Python</span>
<span class="t" style="left:685.80px;top:478.90px;font-size:6.5px;color:#dadada;letter-spacing:0.139px;">3.9.6 64-bit</span>
<span class="t" style="left:727.70px;top:478.90px;font-size:6.5px;color:#dadada;letter-spacing:-0.057px;">Cursor Tab</span>
<div style="left:545px;top:462.500px;width:65px;height:11px;background:radial-gradient(ellipse at center, rgba(120,120,120,.42) 0%, rgba(90,90,90,.22) 40%, rgba(60,60,60,0) 70%)"></div>
</div></div>
</body></html>
